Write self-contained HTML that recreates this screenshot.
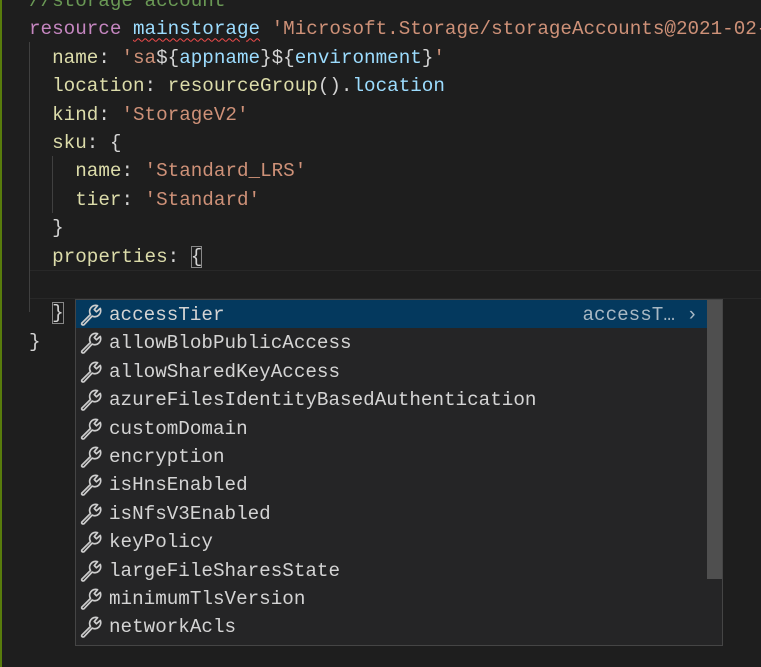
<!DOCTYPE html>
<html><head><style>
html,body{margin:0;padding:0;background:#1e1e1e;width:761px;height:667px;overflow:hidden;position:relative}
.code{position:absolute;left:29px;top:-13px;width:732px;height:680px;overflow:hidden;font-family:"Liberation Mono",monospace;font-size:19.25px;line-height:28.4px;color:#d4d4d4;white-space:pre}
.k{color:#c586c0}.v{color:#9cdcfe}.s{color:#ce9178}.p{color:#dcdcaa}.c{color:#6a9955}.f{color:#dcdcaa}
.sq{text-decoration:underline wavy #f14c4c;text-decoration-thickness:1px;text-underline-offset:3px}
.gbar{position:absolute;left:0;top:0;width:2px;height:667px;background:#587c0c}
.guide{position:absolute;width:1px;background:#404040}
.cur{position:absolute;left:29px;right:0;top:270px;height:27px;border-top:1px solid #282828;border-bottom:1px solid #282828}
.box{position:absolute;left:75px;top:299px;width:646px;height:345px;background:#252526;border:1px solid #454545;overflow:hidden}
.row{height:28.4px;line-height:30px;position:relative;font-family:"Liberation Mono",monospace;font-size:19.25px;color:#d4d4d4;padding-left:33px;white-space:pre}
.row.sel{background:#04395e}
.row svg{position:absolute;left:3px;top:3px}
.det{position:absolute;right:24px;top:0;color:#a8b8c4}
.sb{position:absolute;left:631px;top:0;width:15px;height:279px;background:#4f4f4f;z-index:2}
.bm{outline:1px solid #888;outline-offset:-1px}
</style></head><body>
<div class="gbar"></div>
<div class="cur"></div>
<div class="guide" style="left:29px;top:42px;height:270px"></div>
<div class="guide" style="left:52px;top:156px;height:57px"></div>
<div class="code"><span class="c">//storage account</span>
<span class="k">resource</span> <span class="v sq">mainstorage</span> <span class="s">'Microsoft.Storage/storageAccounts@2021-02-</span>
  <span class="p">name</span>: <span class="s">'sa</span>${<span class="v">appname</span>}${<span class="v">environment</span>}<span class="s">'</span>
  <span class="p">location</span>: <span class="f">resourceGroup</span>().<span class="v">location</span>
  <span class="p">kind</span>: <span class="s">'StorageV2'</span>
  <span class="p">sku</span>: {
    <span class="p">name</span>: <span class="s">'Standard_LRS'</span>
    <span class="p">tier</span>: <span class="s">'Standard'</span>
  }
  <span class="p">properties</span>: <span class="bm">{</span>

  <span class="bm">}</span>
}</div>
<div class="box">
<div class="sb"></div>
<div class="row sel"><svg width="24" height="24" viewBox="0 0 22 22"><path d="M2.5 18.5 L10.5 10.5 A5.5 5.5 0 0 1 17 2.5 L14 6 L16 8 L19.5 5 A5.5 5.5 0 0 1 12 12 L4.5 20 Q3 20.5 2.5 19.5 Z" fill="none" stroke="#ccc" stroke-width="1.6" stroke-linejoin="round"/></svg>accessTier<span class="det">accessT… ›</span></div>
<div class="row"><svg width="24" height="24" viewBox="0 0 22 22"><path d="M2.5 18.5 L10.5 10.5 A5.5 5.5 0 0 1 17 2.5 L14 6 L16 8 L19.5 5 A5.5 5.5 0 0 1 12 12 L4.5 20 Q3 20.5 2.5 19.5 Z" fill="none" stroke="#ccc" stroke-width="1.6" stroke-linejoin="round"/></svg>allowBlobPublicAccess</div>
<div class="row"><svg width="24" height="24" viewBox="0 0 22 22"><path d="M2.5 18.5 L10.5 10.5 A5.5 5.5 0 0 1 17 2.5 L14 6 L16 8 L19.5 5 A5.5 5.5 0 0 1 12 12 L4.5 20 Q3 20.5 2.5 19.5 Z" fill="none" stroke="#ccc" stroke-width="1.6" stroke-linejoin="round"/></svg>allowSharedKeyAccess</div>
<div class="row"><svg width="24" height="24" viewBox="0 0 22 22"><path d="M2.5 18.5 L10.5 10.5 A5.5 5.5 0 0 1 17 2.5 L14 6 L16 8 L19.5 5 A5.5 5.5 0 0 1 12 12 L4.5 20 Q3 20.5 2.5 19.5 Z" fill="none" stroke="#ccc" stroke-width="1.6" stroke-linejoin="round"/></svg>azureFilesIdentityBasedAuthentication</div>
<div class="row"><svg width="24" height="24" viewBox="0 0 22 22"><path d="M2.5 18.5 L10.5 10.5 A5.5 5.5 0 0 1 17 2.5 L14 6 L16 8 L19.5 5 A5.5 5.5 0 0 1 12 12 L4.5 20 Q3 20.5 2.5 19.5 Z" fill="none" stroke="#ccc" stroke-width="1.6" stroke-linejoin="round"/></svg>customDomain</div>
<div class="row"><svg width="24" height="24" viewBox="0 0 22 22"><path d="M2.5 18.5 L10.5 10.5 A5.5 5.5 0 0 1 17 2.5 L14 6 L16 8 L19.5 5 A5.5 5.5 0 0 1 12 12 L4.5 20 Q3 20.5 2.5 19.5 Z" fill="none" stroke="#ccc" stroke-width="1.6" stroke-linejoin="round"/></svg>encryption</div>
<div class="row"><svg width="24" height="24" viewBox="0 0 22 22"><path d="M2.5 18.5 L10.5 10.5 A5.5 5.5 0 0 1 17 2.5 L14 6 L16 8 L19.5 5 A5.5 5.5 0 0 1 12 12 L4.5 20 Q3 20.5 2.5 19.5 Z" fill="none" stroke="#ccc" stroke-width="1.6" stroke-linejoin="round"/></svg>isHnsEnabled</div>
<div class="row"><svg width="24" height="24" viewBox="0 0 22 22"><path d="M2.5 18.5 L10.5 10.5 A5.5 5.5 0 0 1 17 2.5 L14 6 L16 8 L19.5 5 A5.5 5.5 0 0 1 12 12 L4.5 20 Q3 20.5 2.5 19.5 Z" fill="none" stroke="#ccc" stroke-width="1.6" stroke-linejoin="round"/></svg>isNfsV3Enabled</div>
<div class="row"><svg width="24" height="24" viewBox="0 0 22 22"><path d="M2.5 18.5 L10.5 10.5 A5.5 5.5 0 0 1 17 2.5 L14 6 L16 8 L19.5 5 A5.5 5.5 0 0 1 12 12 L4.5 20 Q3 20.5 2.5 19.5 Z" fill="none" stroke="#ccc" stroke-width="1.6" stroke-linejoin="round"/></svg>keyPolicy</div>
<div class="row"><svg width="24" height="24" viewBox="0 0 22 22"><path d="M2.5 18.5 L10.5 10.5 A5.5 5.5 0 0 1 17 2.5 L14 6 L16 8 L19.5 5 A5.5 5.5 0 0 1 12 12 L4.5 20 Q3 20.5 2.5 19.5 Z" fill="none" stroke="#ccc" stroke-width="1.6" stroke-linejoin="round"/></svg>largeFileSharesState</div>
<div class="row"><svg width="24" height="24" viewBox="0 0 22 22"><path d="M2.5 18.5 L10.5 10.5 A5.5 5.5 0 0 1 17 2.5 L14 6 L16 8 L19.5 5 A5.5 5.5 0 0 1 12 12 L4.5 20 Q3 20.5 2.5 19.5 Z" fill="none" stroke="#ccc" stroke-width="1.6" stroke-linejoin="round"/></svg>minimumTlsVersion</div>
<div class="row"><svg width="24" height="24" viewBox="0 0 22 22"><path d="M2.5 18.5 L10.5 10.5 A5.5 5.5 0 0 1 17 2.5 L14 6 L16 8 L19.5 5 A5.5 5.5 0 0 1 12 12 L4.5 20 Q3 20.5 2.5 19.5 Z" fill="none" stroke="#ccc" stroke-width="1.6" stroke-linejoin="round"/></svg>networkAcls</div>
</div>
</body></html>
